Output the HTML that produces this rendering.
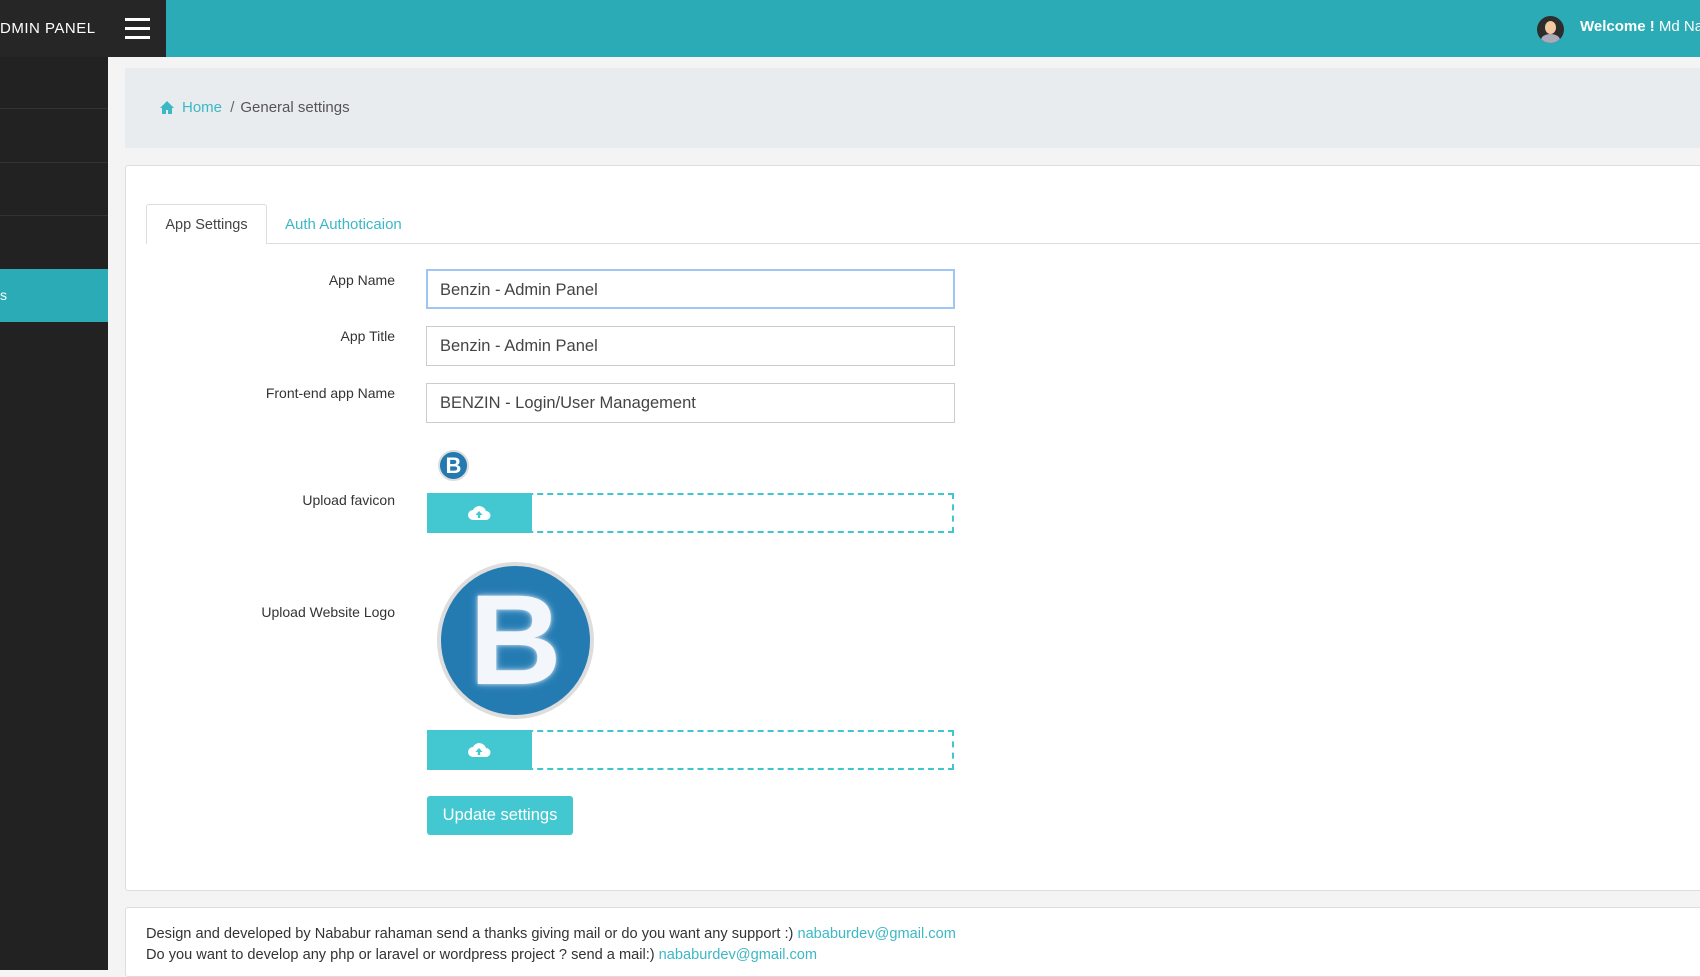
<!DOCTYPE html>
<html><head><meta charset="utf-8"><style>
*{box-sizing:border-box;margin:0;padding:0}
body{width:1700px;height:970px;overflow:hidden;background:#f4f4f4;font-family:"Liberation Sans",sans-serif;position:relative;color:#333}
.abs{position:absolute}
.top{left:0;top:0;width:1700px;height:57px;background:#2babb5}
.brand{left:0;top:0;width:166px;height:57px;background:#262626;color:#fff;font-size:15px;letter-spacing:.5px;line-height:57px;padding-left:0}
.side{left:0;top:57px;width:108px;height:913px;background:#222}
.sep{left:0;width:108px;height:1px;background:#333}
.lbl{font-size:14px;color:#333;text-align:right;width:300px;left:95px}
.inp{left:426px;width:529px;height:40px;border:1px solid #ccc;background:#fff;font-size:16.5px;color:#444;padding-left:13px;line-height:38px}
.up{left:427px;width:527px;height:40px;border:2px dashed #3fc6cf}
.up .b{position:absolute;left:-2px;top:-2px;width:105px;height:40px;background:#43c7d0}
</style></head><body>
<div class="abs top"></div>
<div class="abs brand">DMIN PANEL
 <div class="abs" style="left:125px;top:18px;width:25px;height:3px;background:#fff;box-shadow:0 9px 0 #fff,0 18px 0 #fff"></div></div>
<div class="abs" style="left:1537px;top:16px;width:27px;height:27px;border-radius:50%;background:#2d2d2d;overflow:hidden">
 <div class="abs" style="left:8px;top:5px;width:11px;height:13px;border-radius:50%;background:#f2c9a0"></div>
 <div class="abs" style="left:4px;top:18px;width:19px;height:12px;border-radius:50% 50% 0 0;background:#aab"></div></div>
<div class="abs" style="left:1580px;top:18px;color:#fff;font-size:15px;white-space:nowrap"><b>Welcome !</b> Md Nababur</div>
<div class="abs side"></div>
<div class="abs sep" style="top:108px"></div><div class="abs sep" style="top:162px"></div><div class="abs sep" style="top:215px"></div>
<div class="abs" style="left:0;top:269px;width:108px;height:53px;background:#2babb5;color:#fff;font-size:14px;line-height:53px">s</div>
<div class="abs" style="left:125px;top:68px;width:1575px;height:80px;background:#e9ecef"></div>
<svg class="abs" style="left:159px;top:100px" width="16" height="15" viewBox="0 0 16 15"><path d="M8 1L1 8h2v6h4v-4h2v4h4V8h2z" fill="#3cb8c4"/></svg>
<div class="abs" style="left:182px;top:99px;font-size:15px;color:#3cb8c4">Home <span style="color:#666;margin:0 6px 0 4px">/</span><span style="color:#555">General settings</span></div>
<div class="abs" style="left:125px;top:165px;width:1580px;height:726px;background:#fff;border:1px solid #ddd;border-radius:3px"></div>
<div class="abs" style="left:146px;top:243px;width:1560px;height:1px;background:#ddd"></div>
<div class="abs" style="left:146px;top:204px;width:121px;height:40px;background:#fff;border:1px solid #ddd;border-bottom:none;border-radius:3px 3px 0 0;font-size:14.5px;color:#444;text-align:center;line-height:40px">App Settings</div>
<div class="abs" style="left:285px;top:216px;font-size:15px;color:#3cb8c4">Auth Authoticaion</div>
<div class="abs lbl" style="top:272px">App Name</div>
<div class="abs lbl" style="top:328px">App Title</div>
<div class="abs lbl" style="top:385px">Front-end app Name</div>
<div class="abs lbl" style="top:492px">Upload favicon</div>
<div class="abs lbl" style="top:604px">Upload Website Logo</div>
<div class="abs inp" style="top:269px;border:2px solid #9cc7f5;padding-left:12px">Benzin - Admin Panel</div>
<div class="abs inp" style="top:326px">Benzin - Admin Panel</div>
<div class="abs inp" style="top:383px">BENZIN - Login/User Management</div>
<div class="abs" style="left:438px;top:450px;width:31px;height:31px;border-radius:50%;background:#2479b0;border:2px solid #ddd;color:#fff;font-weight:bold;font-size:22px;text-align:center;line-height:27px">B</div>
<div class="abs up" style="top:493px"><div class="b"></div></div>
<div class="abs up" style="top:730px"><div class="b"></div></div>
<svg class="abs" style="left:467px;top:505px" width="24" height="16" viewBox="0 0 24 16"><path d="M6 15a5 5 0 010-10 7 7 0 0113 1 4.5 4.5 0 010 9z" fill="#fff"/><path d="M12 6l-3.5 4h2.3v3h2.4v-3h2.3z" fill="#43c7d0"/></svg>
<svg class="abs" style="left:467px;top:742px" width="24" height="16" viewBox="0 0 24 16"><path d="M6 15a5 5 0 010-10 7 7 0 0113 1 4.5 4.5 0 010 9z" fill="#fff"/><path d="M12 6l-3.5 4h2.3v3h2.4v-3h2.3z" fill="#43c7d0"/></svg>
<div class="abs" style="left:437px;top:562px;width:157px;height:157px;border-radius:50%;background:#237bb2;border:4px solid #ddd;color:#f3f6fa;font-weight:bold;font-size:128px;text-align:center;line-height:150px;text-shadow:0 0 8px #9cc3e0,0 0 3px #cfe0ee">B</div>
<div class="abs" style="left:427px;top:796px;width:146px;height:39px;background:#43c7d0;border-radius:3px;color:#fff;font-size:16.5px;text-align:center;line-height:39px">Update settings</div>
<div class="abs" style="left:125px;top:907px;width:1580px;height:70px;background:#fff;border:1px solid #ddd;border-radius:3px"></div>
<div class="abs" style="left:146px;top:924px;font-size:14.6px;color:#333;line-height:21px;white-space:nowrap">Design and developed by Nababur rahaman send a thanks giving mail or do you want any support :) <span style="color:#3cb8c4">nababurdev@gmail.com</span><br>Do you want to develop any php or laravel or wordpress project ? send a mail:) <span style="color:#3cb8c4">nababurdev@gmail.com</span></div>
</body></html>
